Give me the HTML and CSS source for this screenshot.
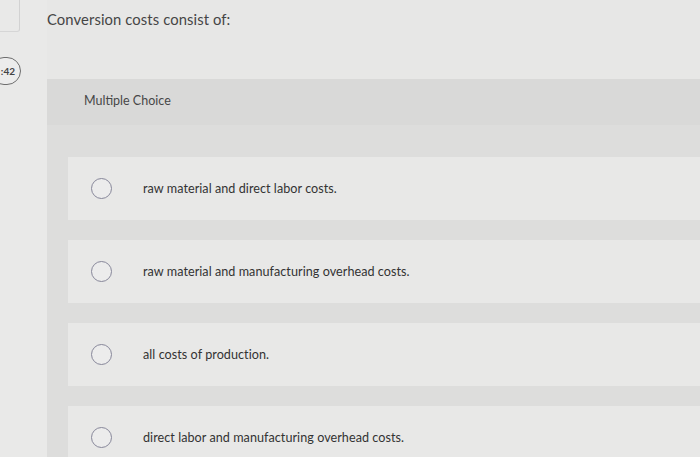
FILE: index.html
```html
<!DOCTYPE html>
<html>
<head>
<meta charset="utf-8">
<link rel="stylesheet" href="styles.css">
</head>
<body>
<div class="page">
  <aside class="side">
    <div class="side-box"></div>
    <div class="badge">:42</div>
  </aside>
  <main class="main">
    <h1 class="title">Conversion costs consist of:</h1>
    <div class="mc-head">Multiple Choice</div>
    <div class="options">
      <div class="opt"><span class="radio"></span><span class="label">raw material and direct labor costs.</span></div>
      <div class="opt"><span class="radio"></span><span class="label">raw material and manufacturing overhead costs.</span></div>
      <div class="opt"><span class="radio"></span><span class="label">all costs of production.</span></div>
      <div class="opt"><span class="radio"></span><span class="label">direct labor and manufacturing overhead costs.</span></div>
    </div>
  </main>
</div>
</body>
</html>
```
FILE: styles.css
```css
html, body {
  margin: 0;
  padding: 0;
  height: 100%;
  overflow: hidden;
}
body {
  background: #e7e7e6;
  font-family: Lato, "Open Sans", sans-serif;
  color: #3a3a3a;
}
.page {
  display: grid;
  grid-template-columns: 47px 1fr;
  height: 457px;
}
.side {
  display: flex;
  flex-direction: column;
  background: #e9e9e8;
}
.side-box {
  width: 20px;
  height: 32px;
  border-right: 1px solid #d2d2d2;
  border-bottom: 1px solid #d6d6d6;
  border-bottom-right-radius: 3px;
  box-sizing: border-box;
}
.badge {
  margin-top: 25px;
  margin-left: -10px;
  width: 31px;
  height: 28px;
  box-sizing: border-box;
  border: 1.5px solid #6e6e6e;
  border-radius: 14px;
  background: #ececec;
  font-size: 10px;
  font-weight: 700;
  color: #444;
  display: flex;
  align-items: center;
  justify-content: flex-end;
  padding-right: 5px;
}
.main {
  display: flex;
  flex-direction: column;
}
.title {
  margin: 0;
  height: 79px;
  box-sizing: border-box;
  padding-top: 10px;
  font-size: 14.8px;
  font-weight: 400;
  color: #454545;
  letter-spacing: 0.1px;
}
.mc-head {
  height: 46px;
  box-sizing: border-box;
  background: #d9d9d8;
  padding-left: 37px;
  padding-top: 14px;
  font-size: 12.5px;
  color: #474747;
}
.options {
  flex: 1;
  background: #dddddc;
  padding-top: 32px;
  padding-left: 21px;
  display: flex;
  flex-direction: column;
  gap: 20px;
}
.opt {
  height: 63px;
  flex-shrink: 0;
  background: #e8e8e7;
  display: flex;
  align-items: center;
  padding-left: 23px;
}
.radio {
  width: 21px;
  height: 21px;
  box-sizing: border-box;
  border: 1.6px solid #87879a;
  border-radius: 50%;
  background: #ececec;
  flex-shrink: 0;
}
.label {
  margin-left: 31px;
  font-size: 12.6px;
  color: #333;
  letter-spacing: 0.05px;
}
```
